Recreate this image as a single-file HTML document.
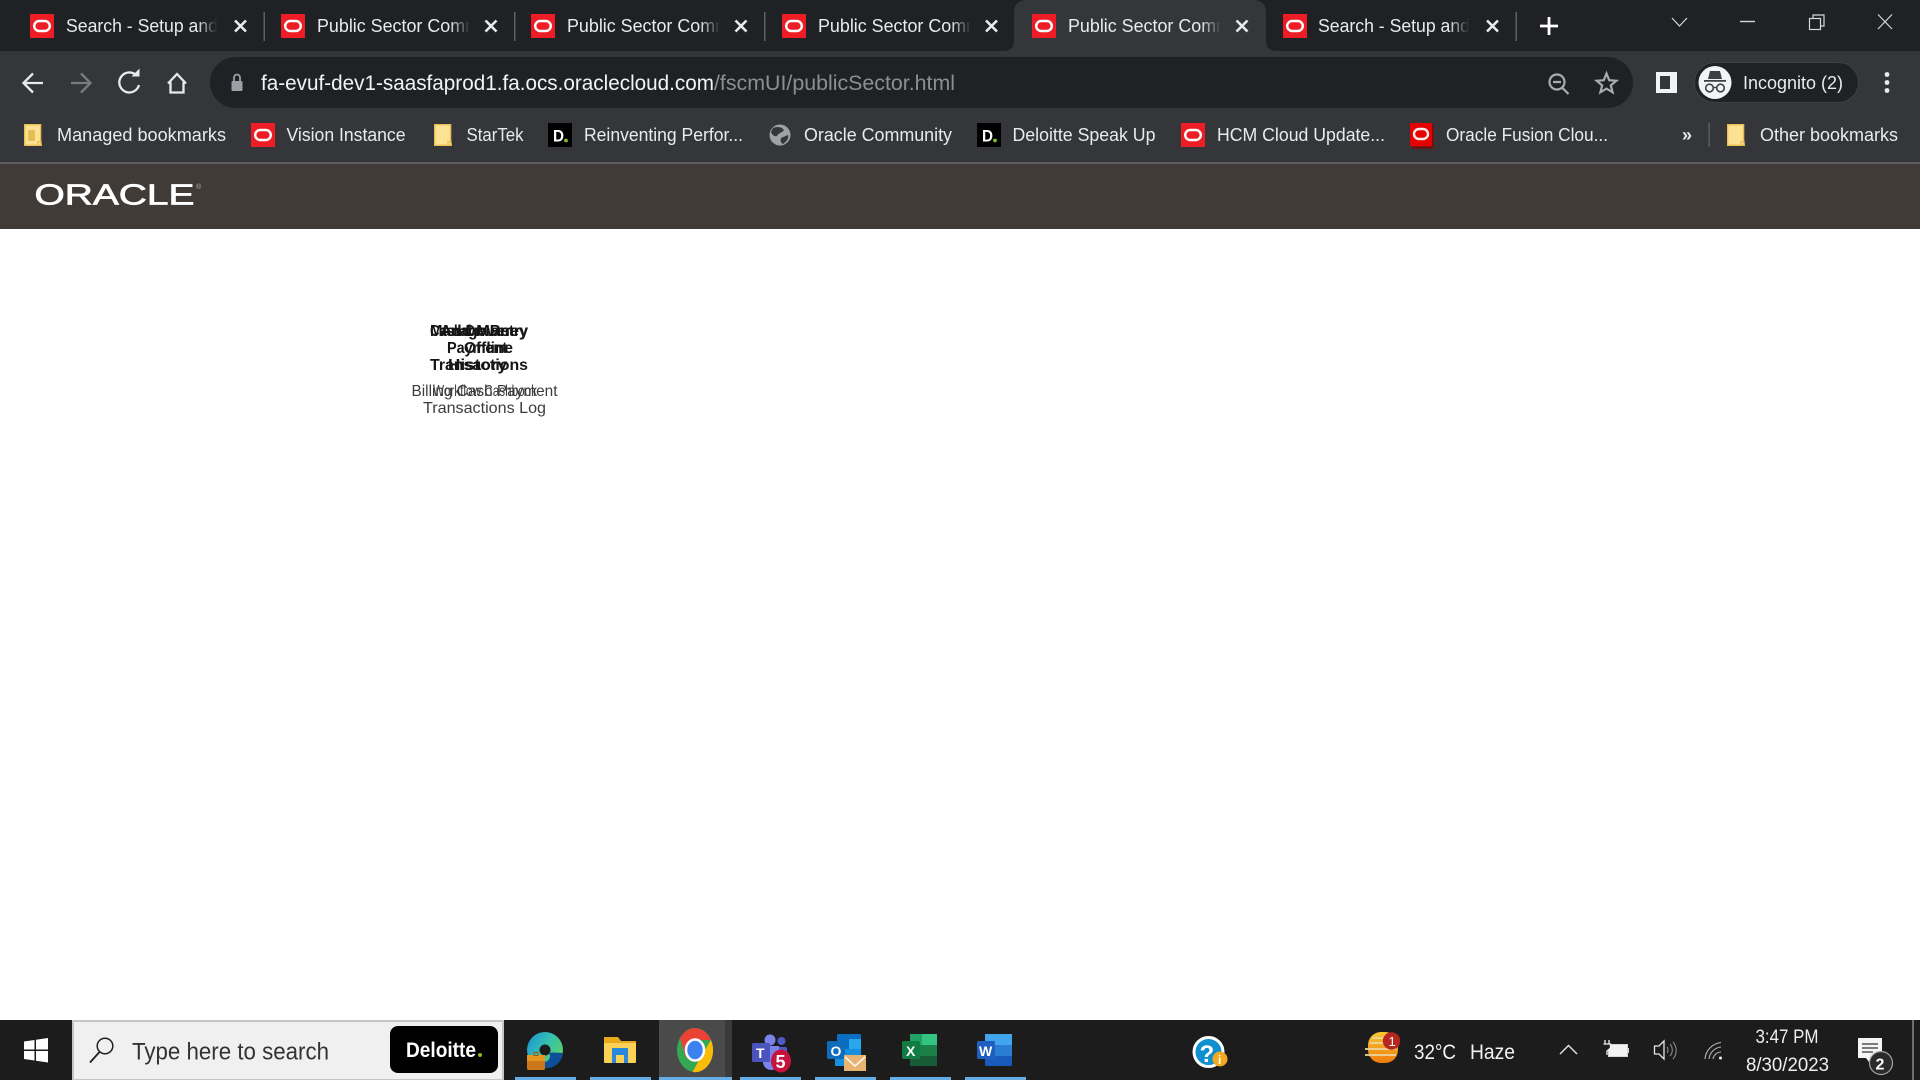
<!DOCTYPE html>
<html><head><meta charset="utf-8"><title>Public Sector Community</title>
<style>
html,body{margin:0;padding:0;width:1920px;height:1080px;overflow:hidden;background:#fff}
svg{display:block;position:absolute;left:0;top:0}
text{font-family:"Liberation Sans",sans-serif}
.t{font-size:18.500px;fill:#e8eaed}
.b{font-size:18.500px;fill:#e8eaed}
.ic{fill:none;stroke:#e8eaed;stroke-width:2.600}
</style></head><body>
<svg width="1920" height="1080" viewBox="0 0 1920 1080" xmlns="http://www.w3.org/2000/svg">
<defs>
<symbol id="ora" viewBox="0 0 24 24"><rect width="24" height="24" fill="#ee1c25"/><rect x="4.200" y="7" width="15.600" height="10" rx="5" fill="none" stroke="#fff" stroke-width="2.400"/></symbol>
<symbol id="del" viewBox="0 0 24 24"><rect width="24" height="24" fill="#000"/><text x="5" y="18.500" font-size="17" font-weight="700" fill="#fff" textLength="11" lengthAdjust="spacingAndGlyphs" style="font-family:'Liberation Sans',sans-serif">D</text><circle cx="18" cy="17.500" r="1.900" fill="#86bc25"/></symbol>
<symbol id="fold" viewBox="0 0 18 22"><path d="M.7.7H16.600V15.500L17.300 21.300H.7Z" fill="#fde293" stroke="#e9bd53" stroke-width="1.400"/><path d="M14 21V17.500H17" fill="none" stroke="#e9bd53" stroke-width="1.300"/></symbol>
<linearGradient id="f1"><stop offset="0" stop-color="#202124" stop-opacity="0"/><stop offset="1" stop-color="#202124"/></linearGradient>
<linearGradient id="f2"><stop offset="0" stop-color="#35363a" stop-opacity="0"/><stop offset="1" stop-color="#35363a"/></linearGradient>
<linearGradient id="sun" x1="0" y1="0" x2="0" y2="1"><stop offset="0" stop-color="#f9c732"/><stop offset="1" stop-color="#ef7b10"/></linearGradient>
<linearGradient id="edge" x1="0" y1="0" x2="1" y2=".6"><stop offset="0" stop-color="#1b8fd8"/><stop offset=".55" stop-color="#35c1b0"/><stop offset="1" stop-color="#5ad06a"/></linearGradient>
</defs>

<!-- chrome -->
<rect width="1920" height="51" fill="#202124"/>
<rect y="51" width="1920" height="111" fill="#35363a"/>
<rect y="162" width="1920" height="2" fill="#5c5d62"/>
<rect y="164" width="1920" height="65" fill="#403b37"/>
<path d="M1003 51C1011 51 1014 47 1014 41V12C1014 5 1019 0 1026 0H1254C1261 0 1266 5 1266 12V41C1266 47 1269 51 1277 51Z" fill="#35363a"/>

<!-- tabs -->
<g>
<use href="#ora" x="30" y="14" width="24" height="24"/>
<text class="t" x="66" y="32" textLength="152" lengthAdjust="spacingAndGlyphs">Search - Setup and</text>
<rect x="197" y="12" width="20" height="28" fill="url(#f1)"/><rect x="217" y="12" width="6" height="28" fill="#202124"/>
<path class="ic" d="M235 20.500l11 11M246 20.500l-11 11"/>
<rect x="263.500" y="12" width="1.500" height="29" fill="#5f6064"/>

<use href="#ora" x="281" y="14" width="24" height="24"/>
<text class="t" x="317" y="32" textLength="163" lengthAdjust="spacingAndGlyphs">Public Sector Comm</text>
<rect x="450" y="12" width="20" height="28" fill="url(#f1)"/><rect x="470" y="12" width="12" height="28" fill="#202124"/>
<path class="ic" d="M485.500 20.500l11 11M496.500 20.500l-11 11"/>
<rect x="514" y="12" width="1.500" height="29" fill="#5f6064"/>

<use href="#ora" x="531" y="14" width="24" height="24"/>
<text class="t" x="567" y="32" textLength="163" lengthAdjust="spacingAndGlyphs">Public Sector Comm</text>
<rect x="700" y="12" width="20" height="28" fill="url(#f1)"/><rect x="720" y="12" width="12" height="28" fill="#202124"/>
<path class="ic" d="M735.500 20.500l11 11M746.500 20.500l-11 11"/>
<rect x="764" y="12" width="1.500" height="29" fill="#5f6064"/>

<use href="#ora" x="782" y="14" width="24" height="24"/>
<text class="t" x="818" y="32" textLength="163" lengthAdjust="spacingAndGlyphs">Public Sector Comm</text>
<rect x="951" y="12" width="20" height="28" fill="url(#f1)"/><rect x="971" y="12" width="12" height="28" fill="#202124"/>
<path class="ic" d="M986 20.500l11 11M997 20.500l-11 11"/>

<use href="#ora" x="1032" y="14" width="24" height="24"/>
<text class="t" x="1068" y="32" textLength="163" lengthAdjust="spacingAndGlyphs">Public Sector Comm</text>
<rect x="1201" y="12" width="20" height="28" fill="url(#f2)"/><rect x="1221" y="12" width="12" height="28" fill="#35363a"/>
<path class="ic" d="M1236.500 20.500l11 11M1247.500 20.500l-11 11"/>

<use href="#ora" x="1283" y="14" width="24" height="24"/>
<text class="t" x="1318" y="32" textLength="152" lengthAdjust="spacingAndGlyphs">Search - Setup and</text>
<rect x="1449" y="12" width="20" height="28" fill="url(#f1)"/><rect x="1469" y="12" width="6" height="28" fill="#202124"/>
<path class="ic" d="M1487 20.500l11 11M1498 20.500l-11 11"/>
<rect x="1515.500" y="12" width="1.500" height="29" fill="#5f6064"/>
<path d="M1549 17V35M1540 26H1558" stroke="#fff" stroke-width="2.800" fill="none"/>
</g>

<!-- window controls -->
<g fill="none" stroke="#d6d7d9" stroke-width="1.200">
<path d="M1672 18l7.500 8 7.500-8"/>
<path d="M1740 21.500H1755" stroke-width="1.400"/>
<rect x="1809.500" y="18.500" width="11" height="11"/>
<path d="M1813 18.500V15H1824V26H1820.500"/>
<path d="M1878 14.500L1892 29M1892 14.500L1878 29"/>
</g>

<!-- nav -->
<g fill="none" stroke="#e8eaed" stroke-width="2.300">
<path d="M43 83H24.500M33 73.500L23.500 83 33 92.500"/>
<path d="M71 83H89.500M81 73.500L90.500 83 81 92.500" stroke="#7a7b7e"/>
<path d="M136.500 75.500A10 10 0 1 0 139 85"/>
<path d="M131.500 76.500H139.500V68.500Z" fill="#e8eaed" stroke="none"/>
<path d="M168 83.500L177 74 186 83.500M170.500 82V92.500H183.500V82"/>
</g>
<rect x="210" y="57" width="1423" height="51" rx="25.500" fill="#202124"/>
<rect x="231.500" y="81" width="11" height="10" rx="1.300" fill="#9aa0a6"/>
<path d="M234 81V77.500A3 3 0 0 1 240 77.500V81" fill="none" stroke="#9aa0a6" stroke-width="1.800"/>
<text x="261" y="90" font-size="21.500" fill="#f1f3f4" textLength="453" lengthAdjust="spacingAndGlyphs">fa-evuf-dev1-saasfaprod1.fa.ocs.oraclecloud.com</text>
<text x="714" y="90" font-size="21.500" fill="#8c8e91" textLength="241" lengthAdjust="spacingAndGlyphs">/fscmUI/publicSector.html</text>
<g fill="none" stroke="#a9abae" stroke-width="2.200">
<circle cx="1557" cy="82" r="7.500"/><path d="M1562.500 88L1568.500 94M1553 82H1561"/>
<path d="M1606.500 73.500L1609.200 80.200 1616.300 80.800 1610.800 85.400 1612.600 92.300 1606.500 88.600 1600.400 92.300 1602.200 85.400 1596.700 80.800 1603.800 80.200Z"/>
</g>
<rect x="1656" y="72" width="21" height="21" fill="#f1f3f4"/>
<rect x="1660" y="76" width="10" height="13" fill="#35363a"/>
<rect x="1694.500" y="62.500" width="164" height="40" rx="20" fill="#202124" stroke="#3f4044"/>
<circle cx="1715" cy="82.500" r="16.500" fill="#f1f3f4"/>
<path d="M1708 79L1710 71H1720L1722 79ZM1704 80H1726V81.800H1704Z" fill="#3c4043"/>
<circle cx="1709.500" cy="88" r="3.800" fill="none" stroke="#3c4043" stroke-width="1.600"/>
<circle cx="1720.500" cy="88" r="3.800" fill="none" stroke="#3c4043" stroke-width="1.600"/>
<path d="M1713 87.500H1717" stroke="#3c4043" stroke-width="1.400"/>
<text class="b" x="1743" y="89" textLength="100" lengthAdjust="spacingAndGlyphs">Incognito (2)</text>
<circle cx="1887" cy="74.500" r="2.400" fill="#e8eaed"/><circle cx="1887" cy="82.500" r="2.400" fill="#e8eaed"/><circle cx="1887" cy="90.500" r="2.400" fill="#e8eaed"/>

<!-- bookmarks -->
<use href="#fold" x="24" y="124" width="18" height="22"/>
<path d="M28 130H35V141H28Z" fill="#e4bd55"/>
<text class="b" x="57" y="141" textLength="169" lengthAdjust="spacingAndGlyphs">Managed bookmarks</text>
<use href="#ora" x="251" y="123" width="24" height="24"/>
<text class="b" x="286.500" y="141" textLength="119" lengthAdjust="spacingAndGlyphs">Vision Instance</text>
<use href="#fold" x="434" y="124" width="18" height="22"/>
<text class="b" x="466.500" y="141" textLength="57" lengthAdjust="spacingAndGlyphs">StarTek</text>
<use href="#del" x="548" y="123" width="24" height="24"/>
<text class="b" x="584" y="141" textLength="159" lengthAdjust="spacingAndGlyphs">Reinventing Perfor...</text>
<circle cx="780" cy="135" r="10.500" fill="#9fa1a4"/>
<path d="M773 128C777 126 782 127 784 130 782 133 778 133 777 136 775 137 772 135 771 132ZM781 138L788 135C789 139 786 142 783 144 781 143 780 141 781 138Z" fill="#35363a"/>
<text class="b" x="804" y="141" textLength="148" lengthAdjust="spacingAndGlyphs">Oracle Community</text>
<use href="#del" x="977" y="123" width="24" height="24"/>
<text class="b" x="1012.500" y="141" textLength="143" lengthAdjust="spacingAndGlyphs">Deloitte Speak Up</text>
<use href="#ora" x="1181" y="123" width="24" height="24"/>
<text class="b" x="1217" y="141" textLength="168" lengthAdjust="spacingAndGlyphs">HCM Cloud Update...</text>
<rect x="1412" y="125" width="22" height="24" fill="#6e1414"/>
<rect x="1410" y="123" width="22" height="23" fill="#e60000"/>
<rect x="1414" y="129" width="14" height="10" rx="5" fill="none" stroke="#ffe9e9" stroke-width="2.400"/>
<text class="b" x="1446" y="141" textLength="162" lengthAdjust="spacingAndGlyphs">Oracle Fusion Clou...</text>
<text x="1682" y="141" font-size="18" font-weight="700" fill="#e8eaed">»</text>
<rect x="1708.500" y="123" width="1.300" height="24" fill="#5f6064"/>
<use href="#fold" x="1727" y="124" width="18" height="22"/>
<text class="b" x="1760" y="141" textLength="138" lengthAdjust="spacingAndGlyphs">Other bookmarks</text>

<!-- oracle logo -->
<text x="34.500" y="204.500" font-size="29" fill="#fff" stroke="#fff" stroke-width=".7" textLength="160" lengthAdjust="spacingAndGlyphs">ORACLE</text>
<text x="196" y="189" font-size="7" fill="#b5b2ae">®</text>

<!-- overlapping page text -->
<g font-size="16" font-weight="700" fill="#161616">
<text x="430" y="336" textLength="80" lengthAdjust="spacingAndGlyphs">Cash Drawer</text>
<text x="430" y="336" textLength="98" lengthAdjust="spacingAndGlyphs">Manage Retry</text>
<text x="440" y="336" textLength="88" lengthAdjust="spacingAndGlyphs">Add Money</text>
<text x="447" y="353" textLength="60" lengthAdjust="spacingAndGlyphs">Payment</text>
<text x="464" y="353" textLength="49" lengthAdjust="spacingAndGlyphs">Offline</text>
<text x="430" y="370" textLength="98" lengthAdjust="spacingAndGlyphs">Transactions</text>
<text x="448" y="370" textLength="59" lengthAdjust="spacingAndGlyphs">History</text>
</g>
<g font-size="16" fill="#3c3c3c">
<text x="411.500" y="396" textLength="146" lengthAdjust="spacingAndGlyphs">Billing Cash Payment</text>
<text x="433" y="396" textLength="104" lengthAdjust="spacingAndGlyphs">Workflow Cashbook</text>
<text x="423" y="413" textLength="123" lengthAdjust="spacingAndGlyphs">Transactions Log</text>
</g>

<!-- taskbar -->
<rect y="1020" width="1920" height="60" fill="#1c1c1c"/>
<path d="M24 1041.500L34.500 1040V1049.500H24ZM36 1039.800L48 1038V1049.500H36ZM24 1051H34.500V1060.500L24 1059ZM36 1051H48V1062.500L36 1060.800Z" fill="#fff"/>
<rect x="73" y="1021" width="430" height="59" fill="#f0f0f0" stroke="#c5c5c5" stroke-width="2"/>
<circle cx="105" cy="1046" r="7.800" fill="none" stroke="#1f1f1f" stroke-width="1.500"/>
<path d="M99.500 1052L90 1062.500" stroke="#1f1f1f" stroke-width="1.800" fill="none"/>
<text x="132" y="1059.500" font-size="24" fill="#333" textLength="197" lengthAdjust="spacingAndGlyphs">Type here to search</text>
<rect x="390" y="1026" width="108" height="47" rx="8" fill="#000"/>
<text x="406" y="1057" font-size="21" font-weight="700" fill="#fff" textLength="70" lengthAdjust="spacingAndGlyphs">Deloitte</text>
<circle cx="480" cy="1055" r="2" fill="#86bc25"/>

<!-- edge -->
<circle cx="545" cy="1050" r="18" fill="url(#edge)"/>
<path d="M563 1053C562 1063 553 1069 545 1068 540 1067 538 1064 541 1062 548 1063 552 1058 549 1053 553 1052 558 1053 563 1053Z" fill="#0d4f99"/>
<circle cx="545" cy="1050" r="5.500" fill="#1c1c1c"/>
<rect x="527" y="1055" width="18" height="15" rx="1.500" fill="#c9771a"/>
<rect x="527" y="1055" width="18" height="6" fill="#e3971f"/>
<rect x="534" y="1052.500" width="4" height="3" fill="none" stroke="#9e5c13"/>
<rect x="515" y="1077" width="61" height="3" fill="#66ade6"/>

<!-- explorer -->
<path d="M604 1037H618L621 1041H636V1062H604Z" fill="#e9a91c"/>
<rect x="604" y="1043" width="32" height="20" rx="1" fill="#fbd258"/>
<path d="M612 1048H628V1063H624V1055H616V1063H612Z" fill="#2b88d8"/>
<rect x="590" y="1077" width="61" height="3" fill="#66ade6"/>

<!-- chrome active -->
<rect x="659" y="1020" width="66" height="60" fill="#4a4a4a"/>
<rect x="725" y="1020" width="7" height="60" fill="#3a3a3a"/>
<ellipse cx="695" cy="1050" rx="18" ry="22" fill="#34a853"/>
<path d="M680 1038A18 22 0 0 1 711 1040L695 1040 686 1058Z" fill="#ea4335"/>
<path d="M711 1040A18 22 0 0 1 692.500 1072L703 1053Z" fill="#fbbc05"/>
<ellipse cx="695" cy="1050" rx="9" ry="10.500" fill="#3b82ee" stroke="#fff" stroke-width="2.500"/>
<rect x="659" y="1077" width="73" height="3" fill="#66ade6"/>

<!-- teams -->
<circle cx="770" cy="1040" r="5.500" fill="#7b83eb"/>
<circle cx="781.500" cy="1041" r="4" fill="#5059c9"/>
<rect x="772" y="1047" width="15" height="15" rx="2" fill="#5059c9"/>
<path d="M763 1046H779V1062A8 8 0 0 1 763 1062Z" fill="#7b83eb"/>
<rect x="752" y="1043" width="18" height="19" rx="1.500" fill="#4b53bc"/>
<text x="756" y="1058" font-size="14" font-weight="700" fill="#fff">T</text>
<ellipse cx="781" cy="1061" rx="10" ry="11.500" fill="#c4143c"/>
<text x="775.500" y="1068" font-size="18" font-weight="700" fill="#fff">5</text>
<rect x="740" y="1077" width="61" height="3" fill="#66ade6"/>

<!-- outlook -->
<rect x="837" y="1034" width="24" height="30" rx="1.500" fill="#0a6fc2"/>
<rect x="849" y="1039" width="12" height="10" fill="#28a8ea"/>
<rect x="835" y="1049" width="26" height="17" fill="#1490df"/>
<rect x="827" y="1041" width="18" height="18" rx="1.500" fill="#0f6cbd"/>
<text x="830.500" y="1056" font-size="14" font-weight="700" fill="#fff">O</text>
<rect x="844" y="1055" width="22" height="16" fill="#e9b472"/>
<path d="M845 1057L855 1066 865 1057" fill="none" stroke="#fff" stroke-width="1.500"/>
<rect x="815" y="1077" width="61" height="3" fill="#66ade6"/>

<!-- excel -->
<rect x="910" y="1034" width="27" height="32" rx="1.500" fill="#1b7f48"/>
<rect x="922" y="1034" width="15" height="11" fill="#33c481"/>
<rect x="910" y="1034" width="12" height="11" fill="#21a366"/>
<rect x="910" y="1056" width="27" height="10" fill="#185c37"/>
<rect x="902" y="1041" width="18" height="18" rx="1.500" fill="#107c41"/>
<text x="906" y="1056" font-size="14" font-weight="700" fill="#fff">X</text>
<rect x="890" y="1077" width="61" height="3" fill="#66ade6"/>

<!-- word -->
<rect x="985" y="1034" width="27" height="32" rx="1.500" fill="#185abd"/>
<rect x="985" y="1034" width="27" height="11" fill="#41a5ee"/>
<rect x="985" y="1045" width="27" height="11" fill="#2b7cd3"/>
<rect x="977" y="1041" width="18" height="18" rx="1.500" fill="#1f5fbf"/>
<text x="979" y="1056" font-size="14" font-weight="700" fill="#fff">W</text>
<rect x="965" y="1077" width="61" height="3" fill="#66ade6"/>

<!-- help -->
<circle cx="1208.500" cy="1052" r="14.500" fill="#0f8fd0" stroke="#fff" stroke-width="3"/>
<text x="1199.500" y="1062" font-size="24" font-weight="700" fill="#fff">?</text>
<circle cx="1220" cy="1059" r="7.500" fill="#f2a91e"/>
<text x="1218" y="1064" font-size="12" font-weight="700" fill="#fff">i</text>

<!-- tray -->
<rect x="1368" y="1032" width="30" height="31" rx="13" fill="url(#sun)"/>
<path d="M1365 1049H1396M1365 1055H1396M1370 1043H1388M1372 1038H1386" stroke="#e9d8a0" stroke-width="1.800" fill="none"/>
<circle cx="1391.500" cy="1041" r="8.700" fill="#b7261c"/>
<text x="1388.500" y="1046" font-size="13" fill="#fff">1</text>
<text x="1414" y="1059" font-size="21" fill="#f2f2f2" textLength="42" lengthAdjust="spacingAndGlyphs">32°C</text>
<text x="1470" y="1059" font-size="21" fill="#f2f2f2" textLength="45" lengthAdjust="spacingAndGlyphs">Haze</text>
<path d="M1560 1054L1568.500 1045.500 1577 1054" fill="none" stroke="#e6e6e6" stroke-width="1.400"/>
<rect x="1608.500" y="1044.500" width="19" height="12" fill="#f2f2f2" stroke="#d5d5d5"/>
<rect x="1627.500" y="1048" width="1.500" height="5" fill="#d5d5d5"/>
<path d="M1605 1040V1044M1609 1040V1044M1603.500 1044H1610.500V1048L1607 1051V1055" fill="#1c1c1c" stroke="#f2f2f2" stroke-width="1.300"/>
<path d="M1654.500 1046H1659L1664 1041V1059L1659 1054H1654.500Z" fill="none" stroke="#e6e6e6" stroke-width="1.300"/>
<path d="M1667 1047A5 5 0 0 1 1667 1053M1670 1044A9 9 0 0 1 1670 1056M1673 1042A13 13 0 0 1 1673 1059" fill="none" stroke="#8a8a8a" stroke-width="1.100"/>
<path d="M1705 1059A18 18 0 0 1 1721 1042.500M1709 1059A13.500 13.500 0 0 1 1721 1047M1713 1059A8.500 8.500 0 0 1 1721 1052" fill="none" stroke="#b5b5b5" stroke-width="1.100"/>
<circle cx="1720.500" cy="1058" r="1.500" fill="#eee"/>
<text x="1755.500" y="1043" font-size="19" fill="#efefef" textLength="63" lengthAdjust="spacingAndGlyphs">3:47 PM</text>
<text x="1746" y="1071" font-size="19" fill="#efefef" textLength="83" lengthAdjust="spacingAndGlyphs">8/30/2023</text>
<path d="M1858 1038H1882V1058H1872L1869 1062 1866 1058H1858Z" fill="#f5f5f5"/>
<path d="M1862 1044H1878M1862 1048H1878M1862 1052H1873" stroke="#333" stroke-width="1.200"/>
<circle cx="1881" cy="1063" r="11.500" fill="#2b2b2b" stroke="#a5a5a5" stroke-width="1.200"/>
<text x="1875.500" y="1069.500" font-size="16" font-weight="700" fill="#fff">2</text>
<rect x="1912" y="1020" width="2" height="60" fill="#6e6e6e"/>
</svg>
</body></html>
